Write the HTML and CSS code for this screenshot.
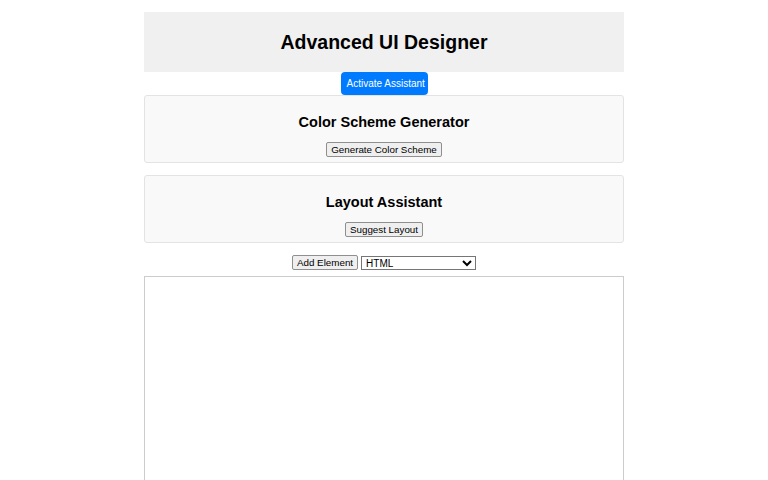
FILE: index.html
```html
<!DOCTYPE html>
<html>
<head>
<meta charset="utf-8">
<link rel="stylesheet" href="styles.css">
</head>
<body>
<div class="app">
  <header class="header"><h1 class="title">Advanced UI Designer</h1></header>
  <div class="assist-row"><button class="btn-primary">Activate Assistant</button></div>
  <section class="card">
    <h2 class="card-title">Color Scheme Generator</h2>
    <div class="card-actions"><button class="btn">Generate Color Scheme</button></div>
  </section>
  <section class="card">
    <h2 class="card-title">Layout Assistant</h2>
    <div class="card-actions"><button class="btn">Suggest Layout</button></div>
  </section>
  <div class="toolbar">
    <button class="btn">Add Element</button>
    <select class="select"><option>HTML</option></select>
  </div>
  <div class="canvas"></div>
</div>
</body>
</html>
```
FILE: styles.css
```css
html, body {
  margin: 0;
  padding: 0;
  background: #fff;
  font-family: "Liberation Sans", Arial, sans-serif;
  color: #000;
}
.app {
  width: 480px;
  margin: 12px auto 0;
  display: flex;
  flex-direction: column;
}
.header {
  background: #f0f0f0;
  height: 60px;
  display: flex;
  align-items: center;
  justify-content: center;
}
.title {
  margin: 0;
  font-size: 19.5px;
  font-weight: bold;
  line-height: 22px;
}
.assist-row {
  display: flex;
  justify-content: center;
}
.btn-primary {
  background: #007bff;
  color: #fff;
  border: none;
  border-radius: 4px;
  font-family: "Liberation Sans", Arial, sans-serif;
  font-size: 10px;
  height: 23px;
  padding: 0 6px;
  width: 87px;
  white-space: nowrap;
}
.card {
  background: #f9f9f9;
  border: 1px solid #e3e3e3;
  border-radius: 3px;
  height: 68px;
  box-sizing: border-box;
  margin-bottom: 12px;
  display: flex;
  flex-direction: column;
  align-items: center;
  padding-top: 17px;
}
.card-title {
  margin: 0;
  font-size: 14.5px;
  line-height: 18px;
  font-weight: bold;
}
.card-actions {
  margin-top: 11px;
  display: flex;
  justify-content: center;
}
.btn {
  font-family: "Liberation Sans", Arial, sans-serif;
  font-size: 9.8px;
  height: 15px;
  padding: 0 4px;
  border: 1px solid #8f8f8f;
  border-radius: 2px;
  background: #efefef;
  color: #000;
  line-height: 13px;
  white-space: nowrap;
}
.toolbar {
  display: flex;
  justify-content: center;
  align-items: center;
  gap: 3px;
  height: 15px;
}
.select {
  font-family: "Liberation Sans", Arial, sans-serif;
  font-size: 10px;
  width: 115px;
  height: 14px;
  padding: 0;
  border: 1px solid #767676;
  border-radius: 0;
  background: #fff;
}
.canvas {
  margin-top: 6px;
  border: 1px solid #ccc;
  height: 400px;
  background: #fff;
}
```
